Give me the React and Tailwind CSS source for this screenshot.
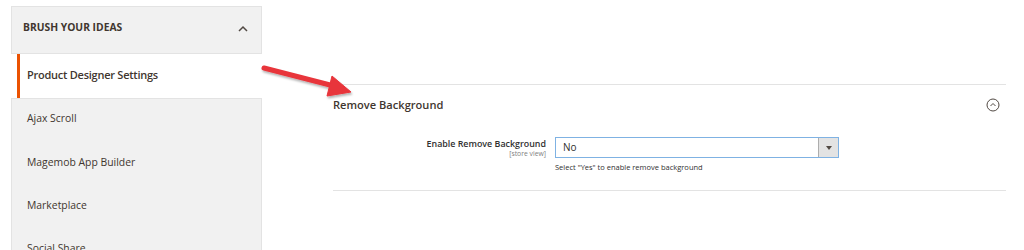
import React from "react";

const items = ["Ajax Scroll", "Magemob App Builder", "Marketplace", "Social Share"];

const Arrow = () => (
  <svg
    className="absolute left-[250px] top-[55px]"
    width="110"
    height="50"
    viewBox="250 55 110 50"
  >
    <defs>
      <filter id="sh" x="-20%" y="-20%" width="140%" height="160%">
        <feDropShadow dx="1" dy="2" stdDeviation="1.2" floodColor="#000" floodOpacity="0.3" />
      </filter>
    </defs>
    <g filter="url(#sh)" fill="#e8343a" stroke="#e8343a">
      <line x1="264" y1="68" x2="334" y2="86" strokeWidth="5" strokeLinecap="round" />
      <polygon points="332,76 351,92 327,96" strokeWidth="1" strokeLinejoin="round" />
    </g>
  </svg>
);

const App = () => {
  return (
    <div className="relative flex w-[1024px] h-[250px] overflow-hidden bg-white font-['Open_Sans',sans-serif] text-[#41362f]">
      <div className="ml-[11px] mt-[6px] w-[251px] shrink-0 flex flex-col">
        <div className="h-[48px] shrink-0 flex items-center justify-between bg-[#f1f1f1] border border-[#e3e3e3] pl-[11px] pr-[13px] pb-[4px]">
          <span className="text-[10.3px] font-bold text-[#41362f]">BRUSH YOUR IDEAS</span>
          <svg width="10" height="7" viewBox="0 0 10 7">
            <path d="M1 6 L5 2 L9 6" fill="none" stroke="#514943" strokeWidth="1.5" />
          </svg>
        </div>
        <div className="h-[44px] shrink-0 ml-[6px] flex items-center bg-white border-l-[3px] border-[#eb5202] pl-[7px] pb-[1px]">
          <span className="text-[11px] font-semibold tracking-[-0.25px] text-[#41362f]">Product Designer Settings</span>
        </div>
        <div className="shrink-0 h-[200px] bg-[#f1f1f1] border border-[#e3e3e3]">
          {items.map((it) => (
            <div key={it} className="h-[43.3px] flex items-center pl-[15px] pb-[3px] text-[10.4px] text-[#41362f]">
              {it}
            </div>
          ))}
        </div>
      </div>

      <div className="flex-1 pl-[71px] pr-[18px] pt-[84px]">
        <div className="border-t border-[#e3e3e3]">
          <div className="h-[40px] flex items-center justify-between">
            <span className="text-[11.1px] font-semibold text-[#41362f]">Remove Background</span>
            <svg width="14" height="14" viewBox="0 0 14 14" className="mr-[6px]">
              <circle cx="7" cy="7" r="6" fill="none" stroke="#514943" strokeWidth="1" />
              <path d="M4.5 8 L7 5.5 L9.5 8" fill="none" stroke="#514943" strokeWidth="1" />
            </svg>
          </div>
          <div className="flex pt-[12px] pb-[17px] border-b border-[#e3e3e3]">
            <div className="w-[213px] flex flex-col items-end pt-[1px]">
              <span className="text-[8.9px] font-semibold leading-[12px] text-[#303030]">Enable Remove Background</span>
              <span className="text-[6.8px] leading-[8px] text-[#808080]">[store view]</span>
            </div>
            <div className="ml-[9px] flex flex-col">
              <div className="w-[284px] h-[21px] flex border border-[#7fb2e3] bg-white">
                <div className="flex-1 flex items-center pl-[7px] text-[10px] text-[#303030]">No</div>
                <div className="w-[20px] flex items-center justify-center bg-[#e3e3e3] border-l border-[#adadad]">
                  <svg width="6" height="4" viewBox="0 0 6 4">
                    <path d="M0 0 L6 0 L3 4 Z" fill="#514943" />
                  </svg>
                </div>
              </div>
              <span className="mt-[3px] text-[7.5px] leading-[12px] text-[#303030]">Select "Yes" to enable remove background</span>
            </div>
          </div>
        </div>
      </div>

      <Arrow />
    </div>
  );
};

export default App;
